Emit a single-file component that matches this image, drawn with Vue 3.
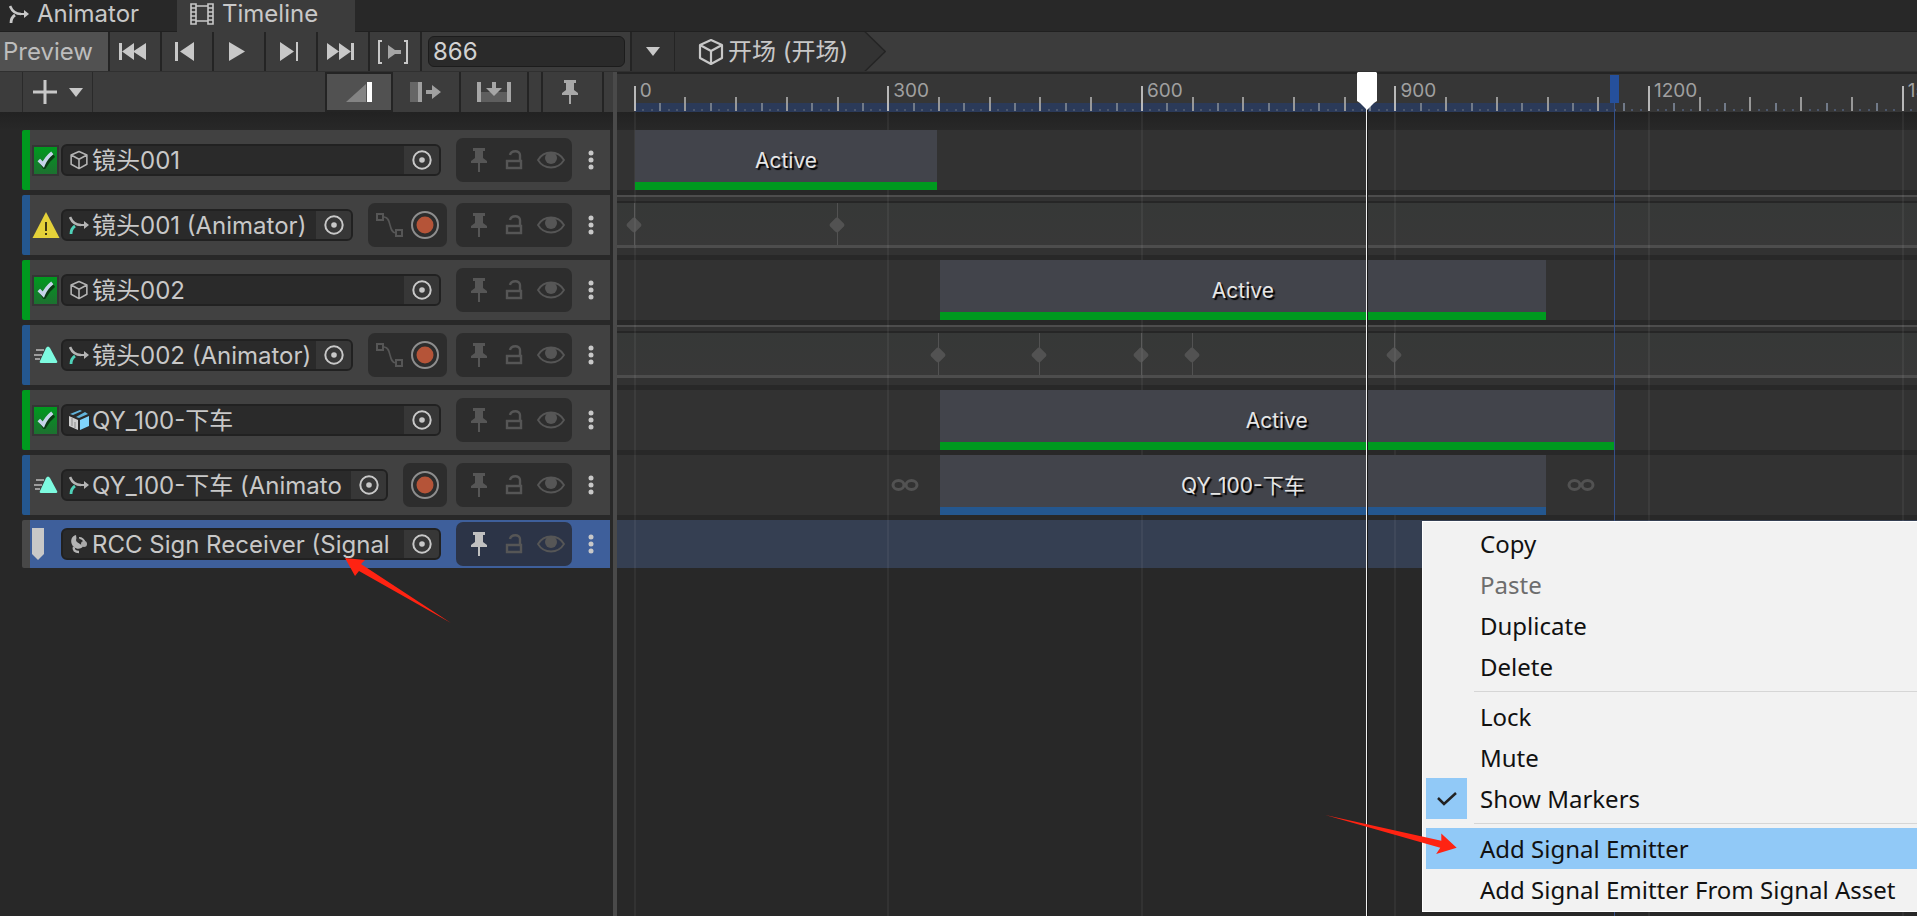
<script setup>
import { ref } from 'vue'

const frame = ref(866)

// visible range of the timeline, in frames
const viewStart = -21
const viewSpan = 1538
const endFrame = 1159

const pos = (f) => ((f - viewStart) / viewSpan) * 100 + '%'
const len = (a, b) => ((b - a) / viewSpan) * 100 + '%'

const ticks = []
for (let f = 0; f <= 1510; f += 10) {
  if (f % 300 === 0) ticks.push({ f, y: 12, cls: 'major' })
  else if (f % 60 === 0) ticks.push({ f, y: 23, cls: 'mid' })
  else if (f % 30 === 0) ticks.push({ f, y: 29, cls: 'minor' })
  else ticks.push({ f, y: 35, cls: 'dot' })
}
const majors = [0, 300, 600, 900, 1200, 1500]

const playback = [
  { icon: 'i-first', label: 'First frame' },
  { icon: 'i-prev', label: 'Previous frame' },
  { icon: 'i-play', label: 'Play' },
  { icon: 'i-next', label: 'Next frame' },
  { icon: 'i-last', label: 'Last frame' },
  { icon: 'i-range', label: 'Play range' }
]

const tracks = [
  { name: '镜头001', kind: 'activation', icon: 'i-cube', clip: { from: 0, to: 358, label: 'Active' } },
  { name: '镜头001 (Animator)', kind: 'animation', icon: 'i-animator', state: 'warning', curves: true, record: true, keys: [0, 240] },
  { name: '镜头002', kind: 'activation', icon: 'i-cube', clip: { from: 361, to: 1078, label: 'Active' } },
  { name: '镜头002 (Animator)', kind: 'animation', icon: 'i-animator', state: 'offset', curves: true, record: true, keys: [360, 480, 600, 660, 900] },
  { name: 'QY_100-下车', kind: 'activation', icon: 'i-prefab', clip: { from: 361, to: 1158, label: 'Active' } },
  { name: 'QY_100-下车 (Animato', kind: 'animation', icon: 'i-animator', state: 'offset', record: true, clip: { from: 361, to: 1078, label: 'QY_100-下车' }, loops: [320, 1119] },
  { name: 'RCC Sign Receiver (Signal', kind: 'signal', icon: 'i-signal', state: 'marker' }
]

const menu = [
  { label: 'Copy' },
  { label: 'Paste', disabled: true },
  { label: 'Duplicate' },
  { label: 'Delete' },
  { sep: true },
  { label: 'Lock' },
  { label: 'Mute' },
  { label: 'Show Markers', checked: true },
  { sep: true },
  { label: 'Add Signal Emitter', active: true },
  { label: 'Add Signal Emitter From Signal Asset' }
]
</script>

<template>
  <div class="editor">
    <!-- icon definitions -->
    <svg class="defs" aria-hidden="true">
      <symbol id="i-animator" viewBox="0 0 20 20">
        <path d="M1 2c2 5 5 8 11 8" fill="none" stroke="currentColor" stroke-width="2.6" />
        <path class="tail" d="M2 19c0-4 1-6 4-8" fill="none" stroke="var(--tail, currentColor)" stroke-width="2.8" />
        <path d="M10 9h5V6l5 4-5 4v-3h-5z" fill="currentColor" />
      </symbol>
      <symbol id="i-film" viewBox="0 0 24 22">
        <path d="M1 1h5v20H1zM18 1h5v20h-5zM6 3h12M6 18h12M1 5h5M1 9h5M1 13h5M1 17h5M18 5h5M18 9h5M18 13h5M18 17h5" fill="none" stroke="currentColor" stroke-width="1.6" />
      </symbol>
      <symbol id="i-first" viewBox="0 0 28 20">
        <path d="M0 1h3v17H0zM3 9.500L15 1v17zM14 9.500L27 1v17z" fill="currentColor" />
      </symbol>
      <symbol id="i-prev" viewBox="0 0 28 20">
        <path d="M4 0h3v19H4zM9 9.500L23 0v19z" fill="currentColor" />
      </symbol>
      <symbol id="i-play" viewBox="0 0 28 20">
        <path d="M6 0l16 9.500L6 19z" fill="currentColor" />
      </symbol>
      <symbol id="i-next" viewBox="0 0 28 20">
        <path d="M21 0h2v19h-2zM5 0l14 9.500L5 19z" fill="currentColor" />
      </symbol>
      <symbol id="i-last" viewBox="0 0 28 20">
        <path d="M24 1h3v17h-3zM0 1l12 8.500L0 18zM12 1l12 8.500L12 18z" fill="currentColor" />
      </symbol>
      <symbol id="i-range" viewBox="0 0 32 24">
        <path d="M5 1H2v22h3M27 1h3v22h-3" fill="none" stroke="currentColor" stroke-width="2" />
        <path d="M11 5v14l7-5h6v-4h-6z" fill="currentColor" opacity=".75" />
      </symbol>
      <symbol id="i-caret" viewBox="0 0 14 9">
        <path d="M0 0h14L7 9z" fill="currentColor" />
      </symbol>
      <symbol id="i-cube" viewBox="0 0 26 28">
        <path d="M13 2l11 5v13l-11 6L2 20V7zM2 7l11 6 11-6M13 13v13" fill="none" stroke="currentColor" stroke-width="2.200" stroke-linejoin="round" />
      </symbol>
      <symbol id="i-prefab" viewBox="0 0 20 20">
        <path d="M0 6l9 4v10l-9-4z" fill="#d0d0d0" />
        <path d="M11 10l9-4v10l-9 4z" fill="#7fd3fb" />
        <path d="M1 4l10-4 2 1L4 5zM7 7l9-5 3 2-9 4z" fill="#62b4dc" />
        <path d="M3 8v8M6 12v6" stroke="#8a8a8a" stroke-width="1" />
      </symbol>
      <symbol id="i-signal" viewBox="0 0 18 20">
        <path d="M6 1C0 2 0 10 4 13c3 3 8 2 9-1l-6-4z" fill="currentColor" />
        <path d="M4 13c-1 3 1 5 5 5" fill="none" stroke="currentColor" stroke-width="2.500" />
        <path d="M9 4c3 0 5 2 6 5" fill="none" stroke="currentColor" stroke-width="2" />
        <circle cx="14" cy="10" r="3" fill="#a8a8a8" />
        <circle cx="8" cy="6" r="2" fill="#333" />
      </symbol>
      <symbol id="i-picker" viewBox="0 0 20 20">
        <circle cx="10" cy="10" r="8.700" fill="none" stroke="currentColor" stroke-width="2" />
        <circle cx="10" cy="10" r="2.800" fill="currentColor" />
      </symbol>
      <symbol id="i-pin" viewBox="0 0 16 24">
        <path d="M2 0h12v3h-2v7l4 3v2h-7v9H7v-9H0v-2l4-3V3H2z" fill="currentColor" />
      </symbol>
      <symbol id="i-lock" viewBox="0 0 18 20">
        <path d="M2 11h14v7H2zM15 11V5c0-5-9-5-10 0" fill="none" stroke="currentColor" stroke-width="2.400" />
      </symbol>
      <symbol id="i-eye" viewBox="0 0 28 18">
        <path d="M1 9c6-10 20-10 26 0-6 10-20 10-26 0z" fill="none" stroke="currentColor" stroke-width="1.800" />
        <circle cx="14" cy="7" r="6" fill="currentColor" />
      </symbol>
      <symbol id="i-dots" viewBox="0 0 6 20">
        <circle cx="3" cy="3" r="2.500" fill="currentColor" />
        <circle cx="3" cy="10" r="2.500" fill="currentColor" />
        <circle cx="3" cy="17" r="2.500" fill="currentColor" />
      </symbol>
      <symbol id="i-curves" viewBox="0 0 28 24">
        <path d="M1 1h6v6H1zM20 17h6v6h-6z" fill="none" stroke="currentColor" stroke-width="2" />
        <path d="M8 4c8 0 4 16 12 16" fill="none" stroke="currentColor" stroke-width="1.600" />
      </symbol>
      <symbol id="i-record" viewBox="0 0 28 28">
        <circle cx="14" cy="14" r="13" fill="none" stroke="#8e8e8e" stroke-width="2" />
        <circle cx="14" cy="14" r="8.500" fill="#b55438" />
      </symbol>
      <symbol id="i-warning" viewBox="0 0 28 28">
        <path d="M14 1l13.500 26H.5z" fill="#e4d139" />
        <path d="M14 11v9M14 22v2" stroke="#3b3715" stroke-width="2" />
      </symbol>
      <symbol id="i-offset" viewBox="0 0 24 18">
        <path d="M2 4h8M0 9h8M1 13h5" stroke="#bcbcbc" stroke-width="1.600" />
        <path d="M12 2q2-3 4 0l7 13q1 2-1 2H7q-2 0-1-2z" fill="#7dfbe0" />
      </symbol>
      <symbol id="i-marker" viewBox="0 0 12 32">
        <path d="M0 0h12v26l-6 6-6-6z" fill="#c8c8c8" />
      </symbol>
      <symbol id="i-tick" viewBox="0 0 20 20">
        <path d="M4 12l4 6c3-5 6-9 11-13" fill="none" stroke="#0a3a12" stroke-width="4" />
        <path d="M2 10l5 5c2-5 5-9 10-13" fill="none" stroke="#c6d4ea" stroke-width="4" />
      </symbol>
      <symbol id="i-infinity" viewBox="0 0 28 14">
        <ellipse cx="7.500" cy="7" rx="5.500" ry="4.500" fill="none" stroke="currentColor" stroke-width="3" />
        <ellipse cx="20.500" cy="7" rx="5.500" ry="4.500" fill="none" stroke="currentColor" stroke-width="3" />
        <path d="M12 5h4v4h-4z" fill="currentColor" />
      </symbol>
      <symbol id="i-mix" viewBox="0 0 26 20">
        <path d="M0 20L20 2v18z" fill="#848484" />
        <path d="M21 0h5v20h-5z" fill="#fff" />
      </symbol>
      <symbol id="i-ripple" viewBox="0 0 32 20">
        <path d="M0 0h8v20H0z" fill="#666" />
        <path d="M8 0h4v20H8zM16 8h6V3l9 7-9 7v-5h-6z" fill="#a0a0a0" />
      </symbol>
      <symbol id="i-replace" viewBox="0 0 34 20">
        <path d="M4 10h26v10H4z" fill="#5e5e5e" />
        <path d="M0 0h4v20H0zM30 0h4v20h-4zM15 0h4v6h6l-8 8-8-8h6z" fill="#a6a6a6" />
      </symbol>
    </svg>

    <nav class="tabs">
      <button class="tab tab-animator"><svg class="ic-20"><use href="#i-animator" /></svg>Animator</button>
      <button class="tab tab-timeline"><svg class="ic-24"><use href="#i-film" /></svg>Timeline</button>
    </nav>

    <div class="toolbar">
      <button class="preview">Preview</button>
      <button v-for="b in playback" :key="b.icon" class="play-btn" :class="b.icon" :aria-label="b.label">
        <svg><use :href="'#' + b.icon" /></svg>
      </button>
      <div class="frame-cell">
        <input v-model="frame" type="text" class="frame-input" aria-label="Current frame">
      </div>
      <button class="director-btn" aria-label="Select director"><svg class="caret"><use href="#i-caret" /></svg></button>
      <div class="crumb">
        <button class="crumb-inner"><svg class="ic-28"><use href="#i-cube" /></svg>开场 (开场)</button>
      </div>
    </div>

    <main class="main">
      <section class="headers">
        <div class="edit-bar">
          <button class="add-btn" aria-label="Add track">
            <svg class="plus" viewBox="0 0 24 24"><path d="M12 0v24M0 12h24" stroke="currentColor" stroke-width="3" /></svg>
            <svg class="caret"><use href="#i-caret" /></svg>
          </button>
          <div class="edit-modes">
            <button class="mode pressed" aria-label="Mix mode"><svg class="m-26"><use href="#i-mix" /></svg></button>
            <button class="mode" aria-label="Ripple mode"><svg class="m-32"><use href="#i-ripple" /></svg></button>
            <button class="mode" aria-label="Replace mode"><svg class="m-34"><use href="#i-replace" /></svg></button>
            <button class="mode pin-mode" aria-label="Show markers"><svg class="pin"><use href="#i-pin" /></svg></button>
          </div>
        </div>

        <ul class="track-list">
          <li v-for="t in tracks" :key="t.name" class="track" :class="t.kind">
            <div class="state">
              <label v-if="!t.state" class="check">
                <input type="checkbox" checked :aria-label="t.name">
                <svg><use href="#i-tick" /></svg>
              </label>
              <svg v-else :class="t.state"><use :href="'#i-' + t.state" /></svg>
            </div>
            <div class="binding">
              <svg class="binding-icon" :class="t.icon"><use :href="'#' + t.icon" /></svg>
              <span class="binding-name">{{ t.name }}</span>
              <button class="picker" aria-label="Select object"><svg class="ic-20"><use href="#i-picker" /></svg></button>
            </div>
            <div v-if="t.record" class="box record-box">
              <button v-if="t.curves" aria-label="Curves"><svg class="curves"><use href="#i-curves" /></svg></button>
              <button aria-label="Record"><svg class="record"><use href="#i-record" /></svg></button>
            </div>
            <div class="box lock-box">
              <button aria-label="Markers" class="pin-btn"><svg class="pin"><use href="#i-pin" /></svg></button>
              <button aria-label="Lock"><svg class="lock"><use href="#i-lock" /></svg></button>
              <button aria-label="Mute"><svg class="eye"><use href="#i-eye" /></svg></button>
            </div>
            <button class="more" aria-label="Options"><svg><use href="#i-dots" /></svg></button>
            <svg v-if="t.kind === 'signal'" class="pointer-track" viewBox="0 0 106 65">
              <path d="M0 0l20 2-4 4 90 59-92-52-4 5z" fill="#ff2312" />
            </svg>
          </li>
        </ul>
      </section>

      <div class="splitter"></div>

      <section class="timeline">
        <div class="ruler">
          <div class="range" :style="{ left: pos(0), width: len(0, endFrame) }"></div>
          <svg class="ticks">
            <line v-for="t in ticks" :key="t.f" :class="t.cls" :x1="pos(t.f)" :x2="pos(t.f)" :y1="t.y" y2="37" />
          </svg>
          <span v-for="m in majors" :key="m" class="num" :style="{ left: pos(m) }">{{ m }}</span>
        </div>

        <div class="lanes">
          <svg class="grid">
            <line v-for="m in majors" :key="m" :x1="pos(m)" :x2="pos(m)" y1="0" y2="100%" />
          </svg>
          <div v-for="t in tracks" :key="t.name" class="lane" :class="[t.kind, { infinite: t.keys }]">
            <div v-if="t.keys" class="keys">
              <span v-for="k in t.keys" :key="k" class="key" :style="{ left: pos(k) }"></span>
            </div>
            <div v-if="t.clip" class="clip" :style="{ left: pos(t.clip.from), width: len(t.clip.from, t.clip.to) }">{{ t.clip.label }}</div>
            <svg v-for="l in t.loops" :key="l" class="loop" :style="{ left: pos(l) }"><use href="#i-infinity" /></svg>
          </div>
        </div>

        <div class="end-line" :style="{ left: pos(endFrame) }"></div>
        <div class="playhead" :style="{ left: pos(frame) }">
          <svg viewBox="0 0 22 38"><path d="M2 0h18l1 1v28l-3 2-4 4-3 3-3-3-4-4-3-2V1z" fill="#fff" /></svg>
        </div>
      </section>
    </main>

    <div class="context-menu" role="menu">
      <template v-for="(m, i) in menu" :key="i">
        <hr v-if="m.sep">
        <button v-else role="menuitem" :disabled="m.disabled" :class="{ active: m.active }">
          <span class="gutter" :class="{ checked: m.checked }">
            <svg v-if="m.checked" viewBox="0 0 20 14"><path d="M1 6l6 6L19 1" fill="none" stroke="#222" stroke-width="2.500" /></svg>
          </span>
          {{ m.label }}
        </button>
      </template>
      <svg class="pointer-menu" viewBox="0 0 128 38">
        <path d="M0 0l113 25V18l15 14-20 6 4-6z" fill="#ff2312" />
      </svg>
    </div>
  </div>
</template>

<style>
body {
  background: #282828;
}
</style>

<style scoped>
* {
  box-sizing: border-box;
}

.editor {
  position: relative;
  display: flex;
  flex-direction: column;
  min-height: 100vh;
  overflow: hidden;
  background: #282828;
  color: #c8c8c8;
  font-family: Inter, "Noto Sans CJK SC", sans-serif;
  font-size: 24px;
  line-height: 28px;
}

.defs {
  position: absolute;
  width: 0;
  height: 0;
}

button {
  display: flex;
  align-items: center;
  justify-content: center;
  padding: 0;
  border: none;
  background: none;
  color: inherit;
  font: inherit;
  white-space: nowrap;
}

svg {
  display: block;
  flex: none;
}

.ic-20 {
  width: 20px;
  height: 20px;
}

.ic-24 {
  width: 24px;
  height: 22px;
}

.ic-28 {
  width: 26px;
  height: 28px;
}

.caret {
  width: 14px;
  height: 9px;
}

/* tabs */
.tabs {
  display: flex;
  height: 32px;
  border-bottom: 1px solid #202020;
}

.tab {
  justify-content: flex-start;
  gap: 8px;
  height: 32px;
  padding-bottom: 4px;
}

.tab-animator {
  width: 177px;
  padding-left: 9px;
}

.tab-timeline {
  width: 178px;
  padding-left: 13px;
  background: #3c3c3c;
}

/* toolbar */
.toolbar {
  display: flex;
  height: 40px;
  background: #3c3c3c;
  border-bottom: 1px solid #303030;
}

.preview {
  width: 108px;
  padding-right: 12px;
  background: #515151;
  color: #bdbdbd;
}

.play-btn {
  width: 52px;
  padding-right: 4px;
  border-left: 2px solid #242424;
}

.play-btn svg {
  width: 28px;
  height: 20px;
}

.play-btn.i-range svg {
  width: 32px;
  height: 24px;
}

.frame-cell {
  display: flex;
  align-items: center;
  width: 210px;
  padding: 0 5px 0 6px;
  border-left: 2px solid #242424;
}

.frame-input {
  width: 100%;
  height: 31px;
  padding: 0 4px;
  border: 1px solid #1c1c1c;
  border-radius: 6px;
  background: #2a2a2a;
  color: #d2d2d2;
  font: inherit;
  outline: none;
}

.director-btn {
  width: 44px;
  border-left: 2px solid #242424;
  background: #333;
}

.crumb {
  padding-right: 2px;
  background: #242424;
  clip-path: polygon(0 0, calc(100% - 20px) 0, 100% 50%, calc(100% - 20px) 100%, 0 100%);
}

.crumb-inner {
  gap: 4px;
  height: 100%;
  padding: 0 36px 0 23px;
  border-left: 1px solid #242424;
  background: #333;
  clip-path: polygon(0 0, calc(100% - 20px) 0, 100% 50%, calc(100% - 20px) 100%, 0 100%);
}

/* body */
.main {
  display: grid;
  grid-template-columns: 613px 4px minmax(0, 1fr);
  flex: 1;
}

.splitter {
  background: #4a4a4a;
}

.edit-bar {
  display: flex;
  justify-content: space-between;
  height: 40px;
  padding: 0 9px 0 22px;
  background: #3c3c3c;
}

.add-btn {
  gap: 12px;
  width: 71px;
  border: solid #2a2a2a;
  border-width: 0 1px;
}

.plus {
  width: 24px;
  height: 24px;
}

.edit-modes {
  display: flex;
}

.mode {
  width: 68px;
  border-right: 2px solid #242424;
}

.mode.pressed {
  border: 2px solid #242424;
  background: #515151;
}

.mode.pin-mode {
  width: 63px;
  margin-left: 12px;
  padding-right: 6px;
  border-left: 2px solid #242424;
  color: #a8a8a8;
}

.m-26 {
  width: 26px;
  height: 20px;
}

.m-32 {
  width: 32px;
  height: 20px;
}

.m-34 {
  width: 34px;
  height: 20px;
}

.pin {
  width: 16px;
  height: 24px;
}

/* track headers */
.track-list {
  display: flex;
  flex-direction: column;
  gap: 5px;
  margin: 0;
  padding: 18px 3px 0 22px;
  background: linear-gradient(#222, #282828 18px);
  list-style: none;
}

.track {
  position: relative;
  display: flex;
  align-items: center;
  height: 60px;
  border-left: 8px solid #24578f;
  border-radius: 2px 0 0 2px;
  background: #414141;
}

.track.activation {
  border-left-color: #009a1f;
}

.track.signal {
  height: 48px;
  border-left-color: #484848;
  background: #3e5f9b;
}

.state {
  display: flex;
  width: 31px;
  padding-left: 2px;
}

.check {
  display: flex;
  align-items: center;
  justify-content: center;
  width: 27px;
  height: 31px;
  border: 2px solid #353535;
  background: linear-gradient(#009a1f, #1d7030);
}

.check input {
  position: absolute;
  margin: 0;
  opacity: 0;
}

.check svg {
  width: 18px;
  height: 18px;
}

.warning {
  width: 28px;
  height: 28px;
}

.offset {
  width: 24px;
  height: 18px;
  margin-left: 2px;
}

.marker {
  width: 12px;
  height: 32px;
}

.binding {
  display: flex;
  align-items: center;
  flex: 1;
  min-width: 0;
  height: 32px;
  margin-right: 15px;
  border: 2px solid #212121;
  border-radius: 6px;
  background: #2a2a2a;
  overflow: hidden;
}

.binding-icon {
  width: 20px;
  height: 20px;
  margin: 0 3px 0 6px;
  color: #b4b4b4;
  --tail: #4fd0b8;
}

.binding-name {
  flex: 1;
  min-width: 0;
  padding-top: 2px;
  overflow: hidden;
  white-space: nowrap;
}

.picker {
  width: 35px;
  height: 28px;
  background: #373737;
}

.box {
  display: flex;
  align-items: center;
  justify-content: center;
  height: 44px;
  border-radius: 7px;
  background: #2d2d2d;
  color: #565656;
}

.record-box {
  gap: 7px;
  margin-right: 9px;
  padding: 0 8px;
}

.curves {
  width: 28px;
  height: 24px;
}

.record {
  width: 28px;
  height: 28px;
}

.lock-box {
  gap: 14px;
  width: 116px;
  padding-left: 8px;
}

.pin-btn {
  margin-right: 4px;
}

.signal .lock-box {
  background: #2c3447;
}

.signal .pin-btn {
  color: #c0c0c0;
}

.lock {
  width: 18px;
  height: 20px;
}

.eye {
  width: 28px;
  height: 18px;
}

.more {
  width: 38px;
}

.more svg {
  width: 6px;
  height: 20px;
}

.pointer-track {
  position: absolute;
  left: 315px;
  top: 38px;
  width: 106px;
  height: 65px;
  z-index: 3;
}

/* timeline */
.timeline {
  position: relative;
  overflow: hidden;
}

.ruler {
  position: relative;
  height: 40px;
  border-top: 2px solid #242424;
  background: #363636;
}

.range {
  position: absolute;
  top: 29px;
  height: 9px;
  background: #2b3a59;
}

.ticks {
  position: absolute;
  width: 100%;
  height: 38px;
  shape-rendering: crispEdges;
}

.ticks .major {
  stroke: #b8b8b8;
  stroke-width: 2px;
}

.ticks .mid {
  stroke: #989898;
  stroke-width: 2px;
}

.ticks .minor {
  stroke: #717a88;
  stroke-width: 2px;
}

.ticks .dot {
  stroke: #4b566b;
  stroke-width: 2px;
}

.num {
  position: absolute;
  top: 5px;
  padding-left: 5px;
  color: #a0a0a0;
  font-size: 19px;
  line-height: 24px;
}

.lanes {
  position: relative;
  display: flex;
  flex-direction: column;
  gap: 5px;
  height: calc(100% - 40px);
  padding-top: 18px;
  background: linear-gradient(#222, #282828 18px);
}

.grid {
  position: absolute;
  top: 0;
  left: 0;
  width: 100%;
  height: 100%;
  z-index: 1;
  shape-rendering: crispEdges;
}

.grid line {
  stroke: rgba(255, 255, 255, 0.05);
  stroke-width: 2px;
}

.lane {
  position: relative;
  flex: none;
  height: 60px;
  background: #323232;
}

.lane.signal {
  height: 48px;
  background: #353f52;
}

.lane.infinite {
  height: 60px;
  padding: 4px 0 5px;
  border-top: 2px solid #4d4d4d;
}

.keys {
  position: relative;
  height: 47px;
  border-top: 2px solid #262626;
  border-bottom: 3px solid #4d4d4d;
  background: linear-gradient(#363837, #383838);
}

.key {
  position: absolute;
  top: 0;
  bottom: 0;
  width: 1px;
  margin-left: -1px;
  background: #525252;
}

.key::after {
  content: '';
  position: absolute;
  left: -6px;
  top: 16px;
  width: 12px;
  height: 12px;
  border-radius: 3px;
  background: #525252;
  transform: rotate(45deg);
}

.clip {
  position: absolute;
  top: 0;
  bottom: 0;
  z-index: 2;
  display: flex;
  align-items: center;
  justify-content: center;
  padding-top: 9px;
  border-bottom: 8px solid #24578f;
  background: #42444b;
  color: #e6e6e6;
  font-size: 21px;
  text-shadow: 2px 2px 1px #000;
  overflow: hidden;
}

.activation .clip {
  border-bottom-color: #009a1f;
}

.loop {
  position: absolute;
  top: 23px;
  width: 28px;
  height: 14px;
  margin-left: -14px;
  color: #525252;
}

.end-line {
  position: absolute;
  top: 3px;
  bottom: 0;
  z-index: 2;
  width: 1px;
  background: #34508a;
}

.end-line::before {
  content: '';
  position: absolute;
  left: -4px;
  width: 9px;
  height: 28px;
  background: #25509c;
}

.playhead {
  position: absolute;
  top: 0;
  bottom: 0;
  z-index: 3;
  width: 1px;
  margin-left: -1px;
  background: #f0f0f0;
  box-shadow: 1px 0 #181818;
}

.playhead svg {
  width: 22px;
  height: 38px;
  margin-left: -10px;
}

/* context menu */
.context-menu {
  position: absolute;
  top: 521px;
  right: 0;
  z-index: 4;
  width: 495px;
  padding: 1px 0 1px 3px;
  border: 1px solid #fff;
  border-right: none;
  background: #f2f2f2;
  color: #111;
  font-family: "Noto Sans", sans-serif;
  font-size: 24px;
}

.context-menu button {
  justify-content: flex-start;
  width: 100%;
  height: 41px;
}

.context-menu button:disabled {
  color: #6d6d6d;
}

.context-menu .active {
  background: #91c9f7;
}

.gutter {
  display: flex;
  align-items: center;
  justify-content: center;
  flex: none;
  width: 41px;
  height: 41px;
  margin-right: 13px;
}

.gutter.checked {
  background: #91c9f7;
}

.gutter svg {
  width: 20px;
  height: 14px;
}

.context-menu hr {
  height: 1px;
  margin: 4px 0 4px 48px;
  border: none;
  background: #d6d6d6;
}

.pointer-menu {
  position: absolute;
  left: -98px;
  top: 293px;
  width: 132px;
  height: 39px;
}
</style>
